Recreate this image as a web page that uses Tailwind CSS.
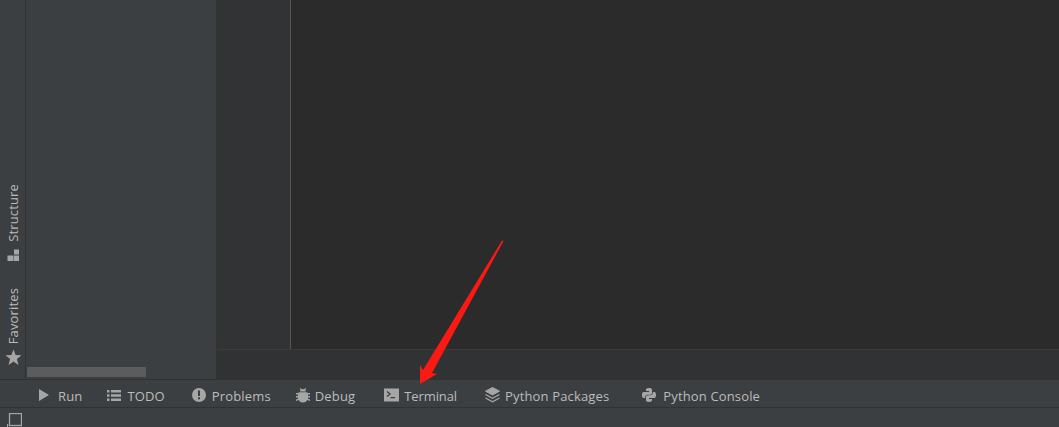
<!DOCTYPE html>
<html><head><meta charset="utf-8"><script src="https://cdn.jsdelivr.net/npm/@tailwindcss/browser@4"></script></head>
<body class="m-0 overflow-hidden bg-[#3c3f41]">
<div class="relative flex h-[427px] w-[1059px] flex-col overflow-hidden bg-[#3c3f41] font-['Open_Sans',sans-serif] text-[13px] tracking-[0.15px] text-[#bbbbbb]">
  <div class="flex h-[380px] border-b border-[#323232]">
    <div class="flex w-[26px] flex-col items-center justify-end border-r border-[#323232] pb-[13px] pl-px">
      <div class="flex flex-col items-center gap-[7px]">
        <span class="rotate-180 leading-[16px] [writing-mode:vertical-rl]">Structure</span>
        <svg class="h-[13px] w-[13px]" viewBox="0 0 13 13" fill="#a6a6a6"><rect x="0.500" y="6.500" width="5.500" height="5.500"/><rect x="6.500" y="6.500" width="5.500" height="5.500"/><rect x="7" y="0.500" width="5" height="5"/></svg>
      </div>
      <div class="mt-[26px] flex flex-col items-center gap-[5px]">
        <span class="rotate-180 leading-[16px] [writing-mode:vertical-rl]">Favorites</span>
        <svg class="h-[17px] w-[17px]" viewBox="0 0 17 17" fill="#a6a6a6"><path d="M8.500 0.500 10.600 6 16.500 6.300 11.900 10 13.500 16 8.500 12.600 3.500 16 5.100 10 0.500 6.300 6.400 6Z"/></svg>
      </div>
    </div>
    <div class="flex w-[191px] flex-col justify-end border-r border-[#323232] pb-[2px] pl-px">
      <div class="h-[10px] w-[119px] bg-[#5a5c5e]"></div>
    </div>
    <div class="flex flex-1 flex-col bg-[#313335]">
      <div class="flex h-[350px] border-b border-[#3c3c3c]">
        <div class="w-[73px]"></div>
        <div class="flex-1 border-l border-[#555555] bg-[#2b2b2b]"></div>
      </div>
      <div class="flex-1 bg-[#313233]"></div>
    </div>
  </div>
  <div class="flex h-[28px] items-center border-b border-[#323232] pt-[3px]">
    <div class="ml-[38px] flex items-center gap-[8px]">
      <svg class="h-[14px] w-[12px]" viewBox="0 0 12 14" fill="#a6a6a6"><path d="M1 1 11 7 1 13Z"/></svg><span class="pt-[4px]">Run</span>
    </div>
    <div class="ml-[25px] flex items-center gap-[6px]">
      <svg class="h-[13px] w-[14px]" viewBox="0 0 14 13" fill="#a6a6a6"><path d="M0 1h2.500v2.500H0zM4 1h10v2.500H4zM0 5.200h2.500v2.500H0zM4 5.200h10v2.500H4zM0 9.400h2.500v2.500H0zM4 9.400h10v2.500H4z"/></svg><span class="pt-[4px]">TODO</span>
    </div>
    <div class="ml-[27px] flex items-center gap-[6px]">
      <svg class="h-[14px] w-[14px]" viewBox="0 0 14 14"><circle cx="7" cy="7" r="7" fill="#a6a6a6"/><rect x="6" y="2.500" width="2" height="5.500" fill="#3c3f41"/><rect x="6" y="9.300" width="2" height="2" fill="#3c3f41"/></svg><span class="pt-[4px]">Problems</span>
    </div>
    <div class="ml-[25px] flex items-center gap-[5px]">
      <svg class="h-[16px] w-[14px]" viewBox="0 0 14 16" fill="#a6a6a6"><path d="M4.500 1 5.800 2.200a3 3 0 0 1 2.400 0L9.500 1l.8.700-1 1.200A3 3 0 0 1 10 4.500H4a3 3 0 0 1 .7-1.600l-1-1.200zM3 5.300h8l.5.700H14v1.500h-2v1.500h2V10.500h-2v1.300l2 .8V14l-2.700-1A4.500 4.500 0 0 1 7 15.500 4.500 4.500 0 0 1 2.700 13L0 14v-1.400l2-.8v-1.300H0V9h2V7.500H0V6h2.500z"/></svg><span class="pt-[4px]">Debug</span>
    </div>
    <div class="ml-[29px] flex items-center gap-[5px]">
      <svg class="h-[14px] w-[15px]" viewBox="0 0 15 14"><rect width="15" height="13" y="0.500" fill="#a6a6a6"/><path d="M3 3.500 6 6 3 8.500" fill="none" stroke="#3c3f41" stroke-width="1.300"/><rect x="6.500" y="9" width="4.500" height="1.300" fill="#3c3f41"/></svg><span class="pt-[4px] tracking-[-0.1px]">Terminal</span>
    </div>
    <div class="ml-[28px] flex items-center gap-[5px]">
      <svg class="h-[16px] w-[15px]" viewBox="0 0 15 16" fill="none" stroke="#a6a6a6"><path d="M7.500 0.500 14.500 4.200 7.500 8 0.500 4.200Z" fill="#a6a6a6"/><path d="M0.500 7.500 7.500 11.300 14.500 7.500M0.500 11 7.500 14.800 14.500 11" stroke-width="1.300"/></svg><span class="pt-[4px]">Python Packages</span>
    </div>
    <div class="ml-[33px] flex items-center gap-[7px]">
      <svg class="h-[14px] w-[14px]" viewBox="0 0 14 14" fill="#a6a6a6"><path d="M4 3V1.700C4 .6 5 0 7 0s3 .6 3 1.700V5c0 1-.8 1.800-1.800 1.800H5.500C4.200 6.800 3.200 7.800 3.200 9v1H1.700C.6 10 0 8.800 0 7s.6-3 1.700-3H7V3Z"/><path d="M10 11v1.300C10 13.400 9 14 7 14s-3-.6-3-1.700V9c0-1 .8-1.800 1.800-1.800h2.700c1.300 0 2.300-1 2.300-2.200V4h1.500C13.400 4 14 5.200 14 7s-.6 3-1.700 3H7v1Z"/></svg><span class="pt-[4px]">Python Console</span>
    </div>
  </div>
  <div class="flex flex-1 items-start pl-[7px] pt-[5px]">
    <svg class="h-[14px] w-[15px]" viewBox="0 0 15 14" fill="none" stroke="#a6a6a6" stroke-width="1.300"><rect x="2.500" y="0.500" width="12" height="12"/><path d="M0.500 11v3"/></svg>
  </div>
  <svg class="pointer-events-none absolute left-[415px] top-[236px] h-[150px] w-[95px]" viewBox="0 0 95 150" fill="#fb1a13"><path d="M88.500 5 87 4.500 8 134 5 129 5 148 22 138 17 137Z"/></svg>
</div>
</body></html>
